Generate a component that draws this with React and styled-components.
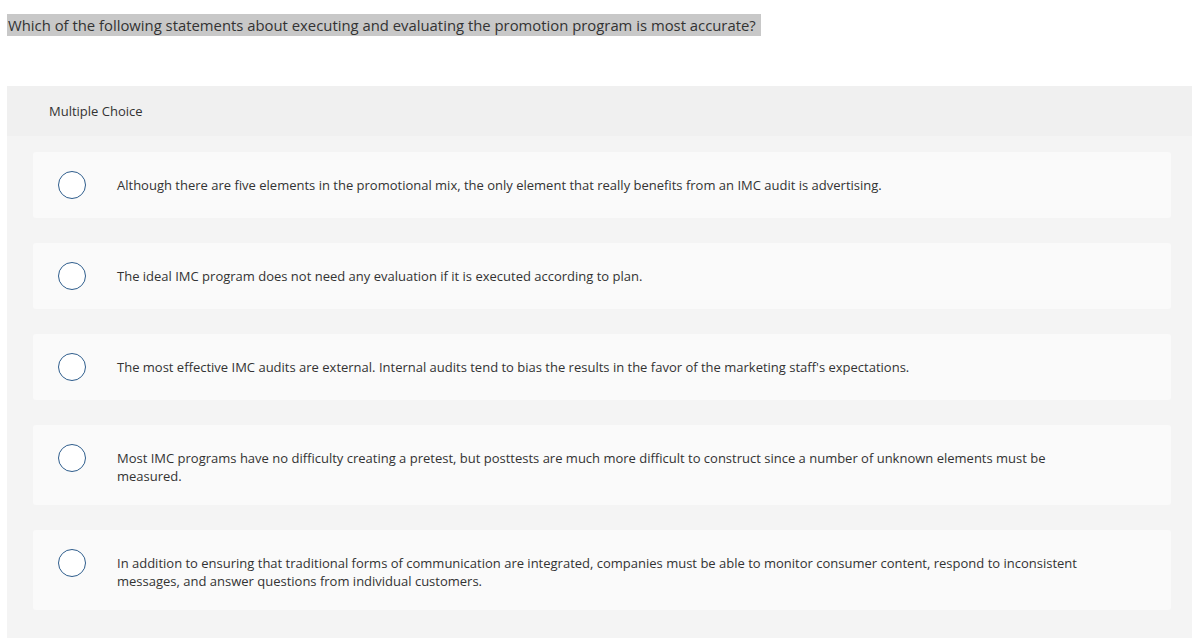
import React from 'react'
import styled, { createGlobalStyle } from 'styled-components'

const GlobalStyle = createGlobalStyle`
  html, body {
    margin: 0;
    padding: 0;
    background: #fff;
  }
  body {
    font-family: "Open Sans", "Liberation Sans", Arial, sans-serif;
    color: #333;
  }
`

const options = [
  'Although there are five elements in the promotional mix, the only element that really benefits from an IMC audit is advertising.',
  'The ideal IMC program does not need any evaluation if it is executed according to plan.',
  "The most effective IMC audits are external. Internal audits tend to bias the results in the favor of the marketing staff's expectations.",
  'Most IMC programs have no difficulty creating a pretest, but posttests are much more difficult to construct since a number of unknown elements must be measured.',
  'In addition to ensuring that traditional forms of communication are integrated, companies must be able to monitor consumer content, respond to inconsistent messages, and answer questions from individual customers.',
]

function App() {
  return (
    <Page>
      <GlobalStyle />
      <Question>
        <Highlight>
          Which of the following statements about executing and evaluating the promotion program is most accurate?
        </Highlight>
      </Question>
      <Panel>
        <PanelHeader>Multiple Choice</PanelHeader>
        <Choices>
          {options.map((text, i) => (
            <Choice key={i}>
              <Radio />
              <ChoiceText>{text}</ChoiceText>
            </Choice>
          ))}
        </Choices>
      </Panel>
    </Page>
  )
}

export default App

let Page = styled.div`
  width: 1192px;
  height: 638px;
  overflow: hidden;
  padding: 14px 0 0 7px;
  box-sizing: border-box;
`

let Question = styled.div`
  font-size: 14.85px;
  line-height: 22px;
  color: #333;
`

let Highlight = styled.span`
  display: inline-block;
  background: #c8c8c8;
  padding: 0 5px 0 1px;
`

let Panel = styled.div`
  margin-top: 50px;
  background: #f4f4f4;
  padding-bottom: 30px;
`

let PanelHeader = styled.div`
  background: #f0f0f0;
  height: 50px;
  display: flex;
  align-items: center;
  padding-left: 42px;
  font-size: 13px;
  color: #333;
`

let Choices = styled.div`
  display: flex;
  flex-direction: column;
  gap: 25px;
  padding: 16px 21px 0 26px;
`

let Choice = styled.div`
  display: flex;
  align-items: flex-start;
  background: #fafafa;
  border-radius: 3px;
  padding: 19px 80px 19px 25px;
`

let Radio = styled.span`
  flex: none;
  box-sizing: border-box;
  width: 28px;
  height: 28px;
  border: 1.5px solid #2e5d8c;
  border-radius: 50%;
  background: #fff;
`

let ChoiceText = styled.div`
  margin: 5px 0 1px 31px;
  font-size: 13px;
  line-height: 18px;
  color: #333;
`
